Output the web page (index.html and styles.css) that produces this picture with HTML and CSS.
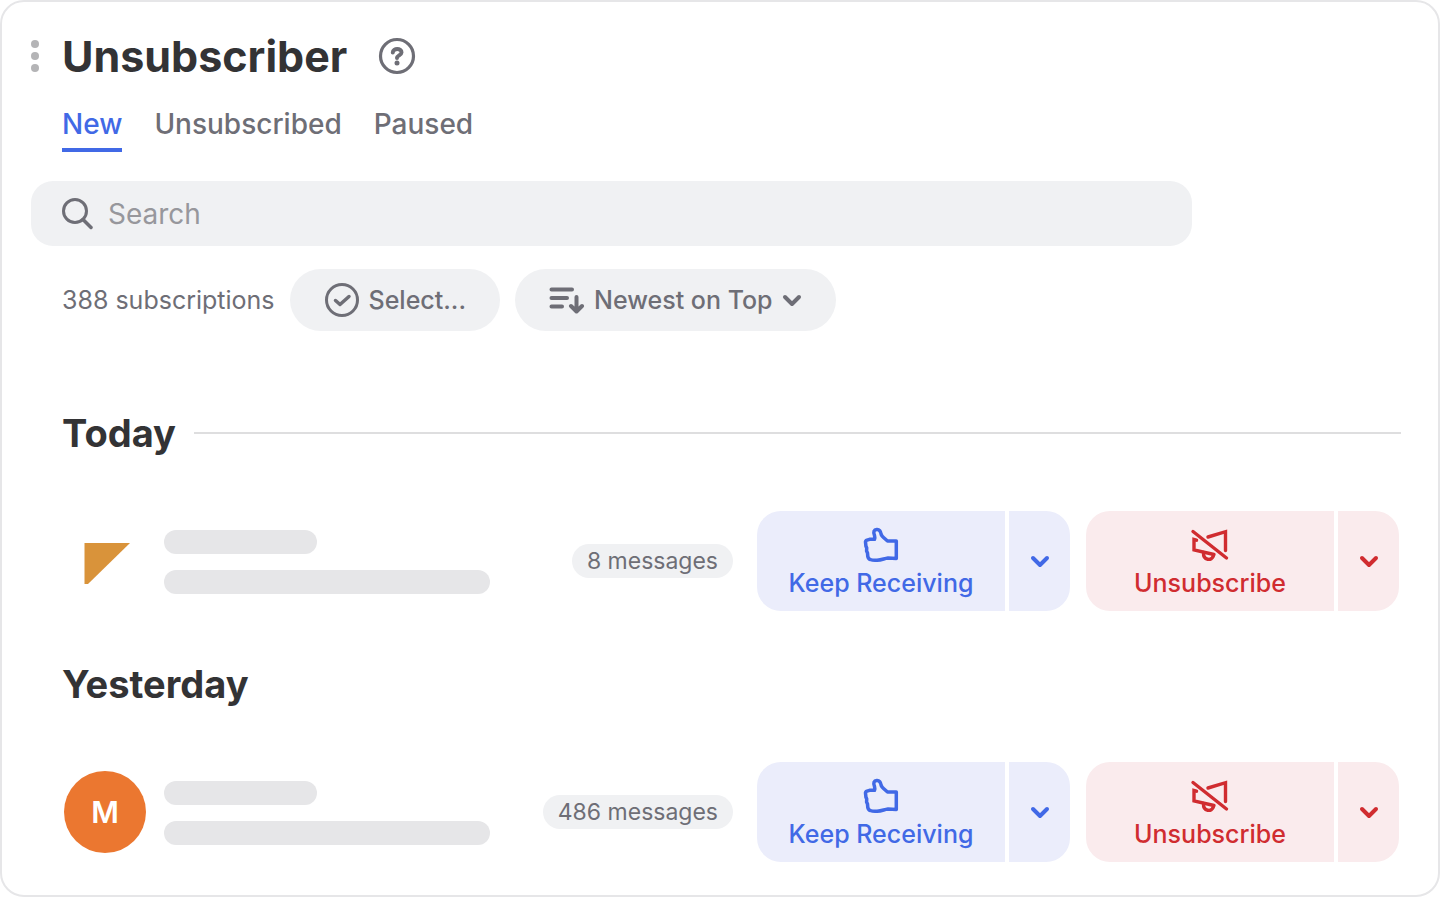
FILE: index.html
```html
<!DOCTYPE html>
<html lang="en">
<head>
    <meta charset="utf-8">
    <title>Unsubscriber</title>
    <meta name="viewport" content="width=device-width, initial-scale=1">
    <link rel="stylesheet" href="styles.css">
</head>
<body>

    <!-- shared icons -->
    <svg class="sprite" aria-hidden="true">
        <symbol id="chevron" viewBox="0 0 20 14">
            <path d="M3 4l7 7 7-7" fill="none" stroke="currentColor" stroke-width="4" stroke-linecap="round" stroke-linejoin="round"/>
        </symbol>
        <symbol id="thumb" viewBox="0 0 38 36">
            <path d="M3.500 15Q3.400 13.600 5 13.100L7.500 12.300 12.500 12.300Q13.200 11 12.500 8.500C11 5 12 2.600 14.800 2.400C18 2.200 18.800 4.500 19.200 7.500Q19.800 9 21.500 10.500L25.500 14H34.300V31.500L26 31C22 31.500 20 33 15 33.200Q11 33.600 8.300 32.500Q6.400 32 5.800 29.500L5.500 26 4.600 24 4.700 21 3.900 19Z" fill="none" stroke="currentColor" stroke-width="3.500" stroke-linejoin="round"/>
        </symbol>
        <symbol id="megaphone" viewBox="0 0 40 36">
            <g fill="none" stroke="currentColor" stroke-width="3.400" stroke-linecap="round">
                <path d="M3 4.500L36.500 31"/>
                <path d="M18 10L35.500 4.700V23.500"/>
                <path d="M6.500 13.200L4 12.500V23L24 27.500"/>
                <path d="M13.500 25.500C13 33.500 22 34.500 23.500 28.500"/>
            </g>
        </symbol>
    </svg>

    <main class="card">
        <header class="header">
            <svg class="grip" width="8" height="32" viewBox="0 0 8 32" fill="currentColor">
                <circle cx="4" cy="4" r="4"/>
                <circle cx="4" cy="16" r="4"/>
                <circle cx="4" cy="28" r="4"/>
            </svg>
            <h1>Unsubscriber</h1>
            <button class="help" type="button" aria-label="Help">
                <svg width="38" height="38" viewBox="0 0 38 38" fill="none" stroke="currentColor">
                    <circle cx="19" cy="19" r="16.500" stroke-width="3.200"/>
                    <path d="M14.800 15.500C15 10.800 23.600 10.800 23.500 15.500C23.400 18.300 19 18.500 19 21" stroke-width="4" stroke-linecap="round"/>
                    <circle cx="19" cy="26" r="2.500" fill="currentColor" stroke="none"/>
                </svg>
            </button>
        </header>

        <nav class="tabs">
            <a class="tab active" href="#new">New</a>
            <a class="tab" href="#unsubscribed">Unsubscribed</a>
            <a class="tab" href="#paused">Paused</a>
        </nav>

        <label class="search">
            <svg width="32" height="32" viewBox="0 0 32 32" fill="none" stroke="currentColor" stroke-width="3" stroke-linecap="round">
                <circle cx="14" cy="13" r="11.500"/>
                <path d="M22 21.500L30 29.500" stroke-width="3.500"/>
            </svg>
            <input type="search" placeholder="Search" aria-label="Search">
        </label>

        <div class="toolbar">
            <span class="total">388 subscriptions</span>
            <button class="pill" type="button">
                <svg width="36" height="36" viewBox="0 0 36 36" fill="none" stroke="currentColor" stroke-width="3" stroke-linecap="round" stroke-linejoin="round">
                    <circle cx="18" cy="18" r="15.500"/>
                    <path d="M11.500 18.500L16 22.500 25 14.500" stroke-width="3.500"/>
                </svg>
                Select...
            </button>
            <label class="pill">
                <svg width="36" height="28" viewBox="0 0 36 28" fill="none" stroke="currentColor" stroke-width="4" stroke-linecap="round" stroke-linejoin="round">
                    <path d="M2.500 3.500H23M2.500 12H18M2.500 20.500H13"/>
                    <path d="M27.500 11V25M22 20L27.500 25.500 33 20"/>
                </svg>
                <select class="sort" aria-label="Sort order">
                    <option>Newest on Top</option>
                </select>
                <svg width="20" height="14"><use href="#chevron"/></svg>
            </label>
        </div>

        <section class="group">
            <div class="group-title">
                <h2>Today</h2>
                <hr>
            </div>
            <div class="row">
                <div class="avatar">
                    <svg width="82" height="82" viewBox="0 0 82 82">
                        <path d="M20.500 23H66L24 64H20.500Z" fill="#d9933a"/>
                    </svg>
                </div>
                <div class="sender">
                    <div class="bar short"></div>
                    <div class="bar"></div>
                </div>
                <span class="count">8 messages</span>
                <div class="actions">
                    <div class="split keep">
                        <button class="main" type="button">
                            <svg width="38" height="36"><use href="#thumb"/></svg>
                            Keep Receiving
                        </button>
                        <button class="more" type="button" aria-label="Keep options">
                            <svg width="20" height="14"><use href="#chevron"/></svg>
                        </button>
                    </div>
                    <div class="split unsub">
                        <button class="main" type="button">
                            <svg width="40" height="36"><use href="#megaphone"/></svg>
                            Unsubscribe
                        </button>
                        <button class="more" type="button" aria-label="Unsubscribe options">
                            <svg width="20" height="14"><use href="#chevron"/></svg>
                        </button>
                    </div>
                </div>
            </div>
        </section>

        <section class="group">
            <div class="group-title">
                <h2>Yesterday</h2>
            </div>
            <div class="row">
                <div class="avatar letter">M</div>
                <div class="sender">
                    <div class="bar short"></div>
                    <div class="bar"></div>
                </div>
                <span class="count">486 messages</span>
                <div class="actions">
                    <div class="split keep">
                        <button class="main" type="button">
                            <svg width="38" height="36"><use href="#thumb"/></svg>
                            Keep Receiving
                        </button>
                        <button class="more" type="button" aria-label="Keep options">
                            <svg width="20" height="14"><use href="#chevron"/></svg>
                        </button>
                    </div>
                    <div class="split unsub">
                        <button class="main" type="button">
                            <svg width="40" height="36"><use href="#megaphone"/></svg>
                            Unsubscribe
                        </button>
                        <button class="more" type="button" aria-label="Unsubscribe options">
                            <svg width="20" height="14"><use href="#chevron"/></svg>
                        </button>
                    </div>
                </div>
            </div>
        </section>
    </main>

</body>
</html>
```
FILE: styles.css
```css
* {
    box-sizing: border-box;
}

body {
    margin: 0;
    background-color: #fff;
    font-family: Inter, "Liberation Sans", sans-serif;
    color: #6e6e76;
}

button,
input,
select {
    margin: 0;
    padding: 0;
    border: 0;
    background: none;
    font: inherit;
    color: inherit;
}

button,
select {
    cursor: pointer;
}

svg {
    display: block;
    flex: none;
}

h1,
h2 {
    margin: 0;
    font-weight: 700;
    color: #333335;
}

.sprite {
    position: absolute;
    width: 0;
    height: 0;
}

.card {
    padding: 28px 37px 33px 29px;
    border: 2px solid #e6e6e8;
    border-radius: 24px;
}

/* === Header === */

.header {
    display: flex;
    align-items: center;
    height: 52px;
}

.grip {
    margin-right: 23px;
    color: #b4b4b6;
}

h1 {
    font-size: 43px;
    line-height: 52px;
}

.help {
    margin-left: 31px;
}

.tabs {
    display: flex;
    gap: 32px;
    margin: 20px 0 29px 31px;
}

.tab {
    height: 50px;
    border-bottom: 4px solid transparent;
    font-size: 28px;
    font-weight: 500;
    line-height: 44px;
    color: inherit;
    text-decoration: none;
}

.tab.active {
    border-color: #4169e6;
    color: #4169e6;
}

.search {
    display: flex;
    align-items: center;
    gap: 15px;
    height: 65px;
    margin-right: 209px;
    padding: 0 30px;
    border-radius: 22px;
    background-color: #f0f1f3;
    font-size: 28px;
}

.search input {
    flex: 1;
    outline: none;
}

.search input::placeholder {
    color: #97979c;
    opacity: 1;
}

.toolbar {
    display: flex;
    align-items: center;
    gap: 15px;
    margin: 23px 0 78px 31px;
    font-size: 25px;
}

.pill {
    display: flex;
    align-items: center;
    gap: 9px;
    height: 62px;
    padding: 0 34px;
    border-radius: 31px;
    background-color: #f0f1f3;
    font-weight: 500;
}

.sort {
    appearance: none;
    outline: none;
}

/* === Subscriptions === */

.group {
    margin-left: 31px;
}

.group + .group {
    margin-top: 49px;
}

.group-title {
    display: flex;
    align-items: center;
    gap: 18px;
    margin-bottom: 54px;
}

h2 {
    font-size: 38px;
    line-height: 48px;
}

hr {
    flex: 1;
    margin: 0;
    border: 0;
    border-top: 2px solid #dededf;
}

.row {
    display: flex;
    align-items: center;
    padding: 0 2px;
}

.avatar {
    flex: none;
    width: 82px;
    height: 82px;
    margin-right: 18px;
    border-radius: 50%;
}

.letter {
    background-color: #eb7730;
    font-size: 30px;
    font-weight: 600;
    line-height: 82px;
    text-align: center;
    color: #fff;
}

.sender {
    display: grid;
    gap: 16px;
    width: 326px;
    padding-top: 2px;
}

.bar {
    height: 24px;
    border-radius: 12px;
    background-color: #e6e6e8;
}

.short {
    width: 47%;
}

.count {
    margin-left: auto;
    padding: 0 15px;
    border-radius: 17px;
    background-color: #f0f1f3;
    font-size: 23px;
    line-height: 34px;
    white-space: nowrap;
}

.actions {
    display: flex;
    gap: 16px;
    margin-left: 24px;
}

.split {
    display: flex;
    gap: 4px;
    height: 100px;
    border-radius: 24px;
    overflow: hidden;
    font-size: 25px;
    font-weight: 500;
}

.keep {
    color: #4169e6;
}

.unsub {
    color: #d02c30;
}

.keep button {
    background-color: #ebedfb;
}

.unsub button {
    background-color: #faebed;
}

.main {
    display: flex;
    flex-direction: column;
    align-items: center;
    width: 248px;
    padding-top: 16px;
    line-height: 40px;
    white-space: nowrap;
}

.more {
    display: flex;
    align-items: center;
    justify-content: center;
    width: 61px;
}
```
